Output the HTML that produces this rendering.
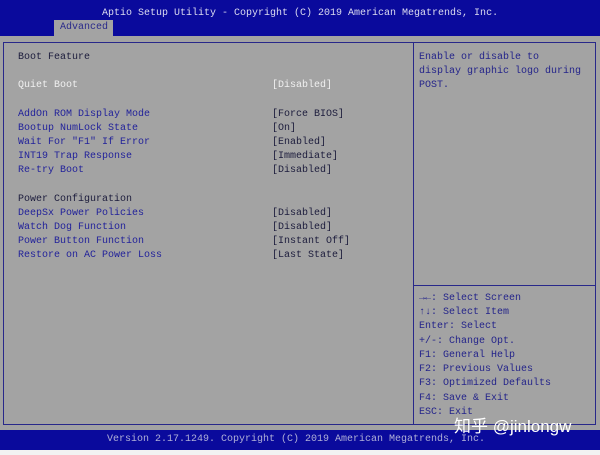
<!DOCTYPE html>
<html><head><meta charset="utf-8"><style>
*{margin:0;padding:0}
body{width:600px;height:455px;background:#f2f2f2;position:relative;overflow:hidden;font-family:"Liberation Mono",monospace;font-size:10px}
.blue{position:absolute;background:#0a0a9c}
.t{position:absolute;white-space:pre;line-height:12px;height:12px;margin-top:2px}
.d{color:#1c1c3c}
.w{color:#f0f0f0}
.b{color:#22229a}
.h{color:#24248a}
</style></head><body>
<div class="blue" style="left:0;top:0;width:600px;height:36px"></div>
<div class="t w" style="left:102px;top:6px;color:#dcdcf0">Aptio Setup Utility - Copyright (C) 2019 American Megatrends, Inc.</div>
<div style="position:absolute;left:54px;top:20px;width:59px;height:16px;background:#a3a3a3"></div>
<div class="t" style="left:60px;top:20px;color:#2a2a8a">Advanced</div>
<div style="position:absolute;left:0;top:36px;width:600px;height:394px;background:#a3a3a3"></div>
<div style="position:absolute;left:3px;top:42px;width:591px;height:381px;border:1px solid #28288a"></div>
<div style="position:absolute;left:413px;top:42px;width:1px;height:382px;background:#28288a"></div>
<div style="position:absolute;left:414px;top:285px;width:181px;height:1px;background:#28288a"></div>
<div class="blue" style="left:0;top:430px;width:600px;height:20px"></div>
<div class="t" style="left:107px;top:432px;color:#b0b0d8">Version 2.17.1249. Copyright (C) 2019 American Megatrends, Inc.</div>

<div class="t d" style="left:18px;top:50px">Boot Feature</div>
<div class="t w" style="left:18px;top:78px">Quiet Boot</div><div class="t w" style="left:272px;top:78px">[Disabled]</div>
<div class="t b" style="left:18px;top:107px">AddOn ROM Display Mode</div><div class="t d" style="left:272px;top:107px">[Force BIOS]</div>
<div class="t b" style="left:18px;top:121px">Bootup NumLock State</div><div class="t d" style="left:272px;top:121px">[On]</div>
<div class="t b" style="left:18px;top:135px">Wait For "F1" If Error</div><div class="t d" style="left:272px;top:135px">[Enabled]</div>
<div class="t b" style="left:18px;top:149px">INT19 Trap Response</div><div class="t d" style="left:272px;top:149px">[Immediate]</div>
<div class="t b" style="left:18px;top:163px">Re-try Boot</div><div class="t d" style="left:272px;top:163px">[Disabled]</div>
<div class="t d" style="left:18px;top:192px">Power Configuration</div>
<div class="t b" style="left:18px;top:206px">DeepSx Power Policies</div><div class="t d" style="left:272px;top:206px">[Disabled]</div>
<div class="t b" style="left:18px;top:220px">Watch Dog Function</div><div class="t d" style="left:272px;top:220px">[Disabled]</div>
<div class="t b" style="left:18px;top:234px">Power Button Function</div><div class="t d" style="left:272px;top:234px">[Instant Off]</div>
<div class="t b" style="left:18px;top:248px">Restore on AC Power Loss</div><div class="t d" style="left:272px;top:248px">[Last State]</div>

<div class="t h" style="left:419px;top:50px">Enable or disable to</div>
<div class="t h" style="left:419px;top:64px">display graphic logo during</div>
<div class="t h" style="left:419px;top:78px">POST.</div>

<div class="t h" style="left:419px;top:291px">→←: Select Screen</div>
<div class="t h" style="left:419px;top:305px">↑↓: Select Item</div>
<div class="t h" style="left:419px;top:319px">Enter: Select</div>
<div class="t h" style="left:419px;top:334px">+/-: Change Opt.</div>
<div class="t h" style="left:419px;top:348px">F1: General Help</div>
<div class="t h" style="left:419px;top:362px">F2: Previous Values</div>
<div class="t h" style="left:419px;top:376px">F3: Optimized Defaults</div>
<div class="t h" style="left:419px;top:391px">F4: Save &amp; Exit</div>
<div class="t h" style="left:419px;top:405px">ESC: Exit</div>
<div style="position:absolute;left:454px;top:416px;font-family:'Liberation Sans','Noto Sans CJK SC',sans-serif;font-size:17px;color:#fff;white-space:pre;line-height:22px">知乎 @jinlongw</div>
</body></html>
